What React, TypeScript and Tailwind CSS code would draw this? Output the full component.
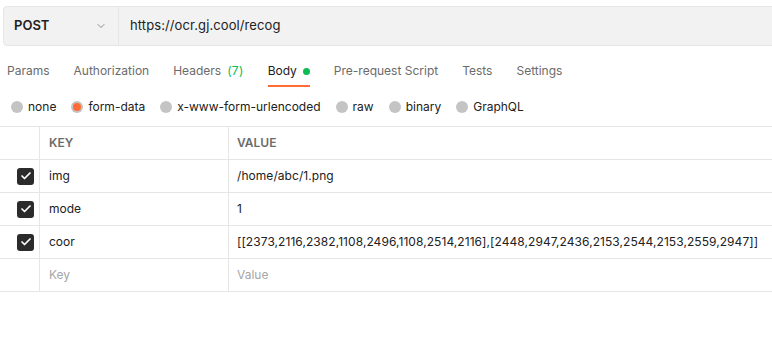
import { ChevronDown, Check } from "lucide-react";

const tabs = [
  { label: "Params" },
  { label: "Authorization" },
  { label: "Headers", count: "(7)" },
  { label: "Body", active: true },
  { label: "Pre-request Script" },
  { label: "Tests" },
  { label: "Settings" },
];

const bodyTypes = ["none", "form-data", "x-www-form-urlencoded", "raw", "binary", "GraphQL"];

const rows = [
  { key: "img", value: "/home/abc/1.png" },
  { key: "mode", value: "1" },
  {
    key: "coor",
    value: "[[2373,2116,2382,1108,2496,1108,2514,2116],[2448,2947,2436,2153,2544,2153,2559,2947]]",
  },
];

export default function App() {
  return (
    <div
      className="w-[772px] h-[357px] bg-white overflow-hidden text-[12px] text-[#212121]"
      style={{ fontFamily: "Inter, 'Noto Sans', sans-serif" }}
    >
      {/* request bar */}
      <div className="pt-[6px] pl-[3px]">
        <div className="flex h-[40px] w-[780px] rounded-[4px] border border-[#e6e6e6] bg-[#f2f2f2] text-[13px]">
          <div className="flex w-[115px] shrink-0 items-center justify-between border-r border-[#e6e6e6] pl-[10px] pr-[11px]">
            <span className="font-semibold">POST</span>
            <ChevronDown size={12} strokeWidth={1.5} className="text-[#6b6b6b]" />
          </div>
          <div className="flex items-center pl-[11px] tracking-[0.1px]">https://ocr.gj.cool/recog</div>
        </div>
      </div>

      {/* tabs */}
      <div className="mt-[10px] flex h-[30px] pl-[7px] gap-[24px]">
        {tabs.map((t) => (
          <div
            key={t.label}
            className={
              "relative flex items-center " + (t.active ? "text-[#212121]" : "text-[#6b6b6b]")
            }
          >
            {t.label}
            {t.count && <span className="ml-[6px] tracking-[0.3px] text-[#0cbb52]">{t.count}</span>}
            {t.active && <span className="ml-[6px] h-[7px] w-[7px] rounded-full bg-[#0cbb52]" />}
            {t.active && (
              <span className="absolute bottom-[-1px] left-0 right-0 h-[2px] bg-[#ff6c37]" />
            )}
          </div>
        ))}
      </div>

      {/* body types */}
      <div className="mt-[10px] flex h-[21px] items-center pl-[11px] gap-[15px]">
        {bodyTypes.map((b) => (
          <div key={b} className="flex items-center gap-[5px]">
            {b === "form-data" ? (
              <span className="flex h-[12px] w-[12px] items-center justify-center rounded-full bg-[#c4c4c4]">
                <span className="h-[8px] w-[8px] rounded-full bg-[#ff6c37]" />
              </span>
            ) : (
              <span className="h-[12px] w-[12px] rounded-full bg-[#c4c4c4]" />
            )}
            <span>{b}</span>
          </div>
        ))}
      </div>

      {/* params table */}
      <div className="mt-[9px] border-t border-[#e6e6e6]">
        <div className="flex h-[33px] border-b border-[#e6e6e6]">
          <div className="w-[40px] shrink-0 border-r border-[#e6e6e6]" />
          <div className="flex w-[189px] shrink-0 items-center border-r border-[#e6e6e6] pl-[9px] font-semibold text-[#6b6b6b]">
            KEY
          </div>
          <div className="flex min-w-0 flex-1 items-center pl-[8px] font-semibold text-[#6b6b6b]">VALUE</div>
        </div>
        {rows.map((r) => (
          <div key={r.key} className="flex h-[33px] border-b border-[#e6e6e6]">
            <div className="flex w-[40px] shrink-0 items-center border-r border-[#e6e6e6] pl-[17px]">
              <span className="flex h-[17px] w-[17px] items-center justify-center rounded-[3px] bg-[#2b2b2b]">
                <Check size={12} strokeWidth={3.5} className="text-white" />
              </span>
            </div>
            <div className="flex w-[189px] shrink-0 items-center border-r border-[#e6e6e6] pl-[9px]">{r.key}</div>
            <div className="flex min-w-0 flex-1 items-center whitespace-nowrap pl-[8px] tracking-[0.06px]">{r.value}</div>
          </div>
        ))}
        <div className="flex h-[33px] border-b border-[#e6e6e6] text-[#a6a6a6]">
          <div className="w-[40px] shrink-0 border-r border-[#e6e6e6]" />
          <div className="flex w-[189px] shrink-0 items-center border-r border-[#e6e6e6] pl-[9px]">Key</div>
          <div className="flex min-w-0 flex-1 items-center pl-[8px]">Value</div>
        </div>
      </div>
    </div>
  );
}
